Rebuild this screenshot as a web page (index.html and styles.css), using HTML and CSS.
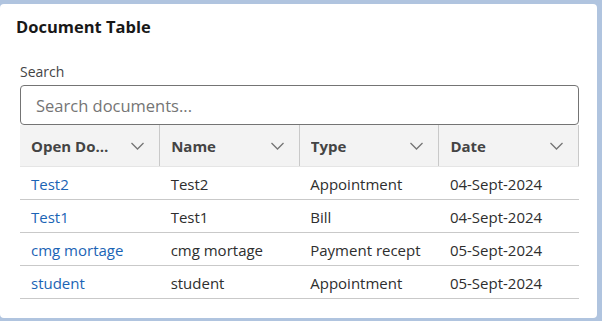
FILE: index.html
```html
<!DOCTYPE html>
<html lang="en">
<head>
  <meta charset="UTF-8" />
  <title>Document Table</title>
  <link rel="stylesheet" href="styles.css">
</head>
<body>
  <div class="card">
    <h2 class="card-title">Document Table</h2>

    <div class="card-body">
      <!-- Busca -->
      <label class="search-label" for="search">Search</label>
      <input type="text" id="search" class="search-input" placeholder="Search documents...">

      <!-- Tabela -->
      <table class="doc-table">
        <thead>
          <tr>
            <th><div class="th-inner"><span class="th-text">Open Document</span><svg class="chev" viewBox="0 0 14 8"><path d="M1 1l6 6 6-6"/></svg></div></th>
            <th><div class="th-inner"><span class="th-text">Name</span><svg class="chev" viewBox="0 0 14 8"><path d="M1 1l6 6 6-6"/></svg></div></th>
            <th><div class="th-inner"><span class="th-text">Type</span><svg class="chev" viewBox="0 0 14 8"><path d="M1 1l6 6 6-6"/></svg></div></th>
            <th><div class="th-inner"><span class="th-text">Date</span><svg class="chev" viewBox="0 0 14 8"><path d="M1 1l6 6 6-6"/></svg></div></th>
          </tr>
        </thead>
        <tbody>
          <tr>
            <td><a href="#">Test2</a></td>
            <td>Test2</td>
            <td>Appointment</td>
            <td>04-Sept-2024</td>
          </tr>
          <tr>
            <td><a href="#">Test1</a></td>
            <td>Test1</td>
            <td>Bill</td>
            <td>04-Sept-2024</td>
          </tr>
          <tr>
            <td><a href="#">cmg mortage</a></td>
            <td>cmg mortage</td>
            <td>Payment recept</td>
            <td>05-Sept-2024</td>
          </tr>
          <tr>
            <td><a href="#">student</a></td>
            <td>student</td>
            <td>Appointment</td>
            <td>05-Sept-2024</td>
          </tr>
        </tbody>
      </table>
    </div>
  </div>
</body>
</html>
```

FILE: styles.css
```css
/* Estilos gerais */
body {
  font-family: "Open Sans", Arial, sans-serif;
  background-color: #b0c4df;
  margin: 0;
  color: #181818;
}

.card {
  background-color: #fff;
  border-radius: 4px;
  margin: 4px 5px 3px 0;
  height: 314px;
  box-sizing: border-box;
  padding-top: 13px;
}

.card-title {
  margin: 0 0 26px 16px;
  font-size: 16.5px;
  line-height: 20px;
  font-weight: bold;
  color: #181818;
}

.card-body {
  padding: 0 18px 0 20px;
}

/* Busca */
.search-label {
  display: block;
  font-size: 14px;
  line-height: 18px;
  color: #444;
  margin-bottom: 4px;
}

.search-input {
  display: block;
  width: 100%;
  height: 40px;
  box-sizing: border-box;
  padding: 0 15px;
  font-family: inherit;
  font-size: 16.5px;
  border: 1px solid #747474;
  border-radius: 4px;
  color: #181818;
}

.search-input::placeholder {
  color: #757575;
}

/* Tabela */
.doc-table {
  width: 100%;
  table-layout: fixed;
  border-collapse: collapse;
  font-size: 15px;
}

.doc-table th {
  background-color: #f3f3f3;
  height: 41px;
  padding: 0;
  border-right: 1px solid #c9c9c9;
  border-bottom: 1px solid #e5e5e5;
  text-align: left;
}

.th-inner {
  display: flex;
  align-items: center;
  padding: 1px 14px 0 11px;
  gap: 16px;
}

.th-text {
  flex: 1;
  min-width: 0;
  overflow: hidden;
  white-space: nowrap;
  text-overflow: ellipsis;
  font-weight: bold;
  color: #444;
}

.chev {
  width: 15px;
  height: 8px;
  flex-shrink: 0;
  fill: none;
  stroke: #747474;
  stroke-width: 1.3;
}

.doc-table td {
  height: 33px;
  box-sizing: border-box;
  padding: 1px 11px 0;
  line-height: 20px;
  border-bottom: 1px solid #c9c9c9;
  white-space: nowrap;
  overflow: hidden;
  color: #2e2e2e;
}

.doc-table td a {
  color: #1b64b5;
  text-decoration: none;
}
```
